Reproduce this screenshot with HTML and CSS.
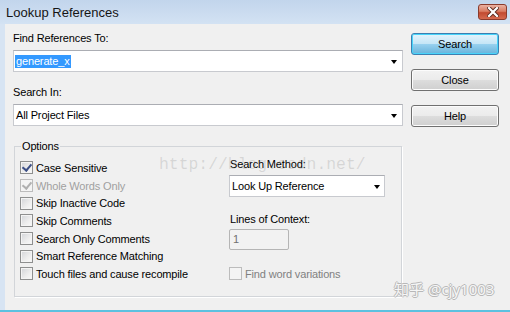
FILE: index.html
```html
<!DOCTYPE html>
<html>
<head>
<meta charset="utf-8">
<link rel="stylesheet" href="styles.css">
</head>
<body>
<div class="window">
  <div class="titlebar">
    <span class="title">Lookup References</span>
    <span class="close">
      <svg width="12" height="10" viewBox="0 0 12 10"><path d="M2 1 L10 9 M10 1 L2 9" stroke="#5a2a20" stroke-width="4" stroke-linecap="square"/><path d="M2 1 L10 9 M10 1 L2 9" stroke="#fff" stroke-width="2.2" stroke-linecap="square"/></svg>
    </span>
  </div>
  <div class="client">
    <div class="main">
      <div class="label">Find References To:</div>
      <div class="combo"><span class="value"><span class="sel">generate_x</span></span><span class="arrow"></span></div>
      <div class="label label-gap">Search In:</div>
      <div class="combo"><span class="value">All Project Files</span><span class="arrow"></span></div>
      <fieldset class="group">
        <legend>Options</legend>
        <div class="group-body">
          <div class="checks">
            <div class="row"><span class="cb on"></span><span>Case Sensitive</span></div>
            <div class="row dis"><span class="cb on"></span><span>Whole Words Only</span></div>
            <div class="row"><span class="cb"></span><span>Skip Inactive Code</span></div>
            <div class="row"><span class="cb"></span><span>Skip Comments</span></div>
            <div class="row"><span class="cb"></span><span>Search Only Comments</span></div>
            <div class="row"><span class="cb"></span><span>Smart Reference Matching</span></div>
            <div class="row"><span class="cb"></span><span>Touch files and cause recompile</span></div>
          </div>
          <div class="side">
            <div class="side-label">Search Method:</div>
            <div class="combo small"><span class="value">Look Up Reference</span><span class="arrow"></span></div>
            <div class="side-label second">Lines of Context:</div>
            <div class="spin">1</div>
            <div class="row dis2 last"><span class="cb off"></span><span>Find word variations</span></div>
          </div>
        </div>
      </fieldset>
    </div>
    <div class="buttons">
      <div class="btn default">Search</div>
      <div class="btn">Close</div>
      <div class="btn">Help</div>
    </div>
  </div>
  <div class="bottom-line"></div>
  <div class="watermark">http://blog.csdn.net/</div>
  <div class="credit">知乎 @cjy1003</div>
</div>
</body>
</html>
```

FILE: styles.css
```css
* { box-sizing: border-box; }
html, body { margin: 0; padding: 0; }
body {
  width: 510px;
  height: 312px;
  overflow: hidden;
  font-family: "Liberation Sans", Arial, sans-serif;
  font-size: 11px;
  letter-spacing: -0.15px;
  color: #000;
  background: #f0f0f0;
}
.window {
  position: relative;
  width: 510px;
  height: 312px;
  display: flex;
  flex-direction: column;
  background: #f0f0f0;
}
.titlebar {
  height: 24px;
  flex: none;
  display: flex;
  align-items: center;
  justify-content: space-between;
  padding: 0 3px 0 6px;
  background: linear-gradient(#c2d5ec, #d3e2f3);
}
.title {
  font-size: 13px;
  letter-spacing: 0;
  color: #151515;
  padding-top: 1px;
}
.close {
  width: 29px;
  height: 16px;
  margin-top: 0;
  border: 1px solid #8a3b2c;
  border-radius: 3px;
  background: linear-gradient(#eab1a2 0%, #d97c62 45%, #c24a30 55%, #d56a4f 100%);
  display: flex;
  align-items: center;
  justify-content: center;
}
.client {
  flex: 1;
  display: flex;
  border-left: 5px solid #d7e4f3;
  padding: 7px 0 0 8px;
}
.main { width: 390px; flex: none; }
.label { height: 15px; line-height: 15px; }
.label-gap { margin-top: 13px; }
.combo {
  margin-top: 4px;
  height: 22px;
  background: #fff;
  border: 1px solid #c8cacf;
  border-top-color: #abadb3;
  display: flex;
  align-items: center;
  justify-content: space-between;
  padding: 0 5px 0 1px;
}
.combo .value { line-height: 13px; padding-left: 1px; }
.sel {
  display: inline-block;
  background: #3399ff;
  color: #fff;
  padding: 0 1px 0 1px;
  margin-left: -1px;
  line-height: 13px;
}
.arrow {
  width: 0;
  height: 0;
  border-left: 3.5px solid transparent;
  border-right: 3.5px solid transparent;
  border-top: 4px solid #000;
  margin-top: 1px;
}
.group {
  width: 388px;
  margin: 13px 0 0 1px;
  padding: 0 5px 13px 5px;
  border: 1px solid #d2d5d9;
  box-shadow: 1px 1px 0 #fff;
  min-inline-size: 0;
}
.group legend {
  margin-left: 1px;
  padding: 0 1px;
  line-height: 15px;
  height: 15px;
}
.group-body {
  display: flex;
  padding-top: 5px;
}
.checks { width: 209px; flex: none; }
.row {
  height: 17.7px;
  display: flex;
  align-items: center;
  gap: 3px;
  white-space: nowrap;
}
.cb {
  position: relative;
  width: 13px;
  height: 13px;
  flex: none;
  border: 1px solid #8e8f8f;
  background: linear-gradient(135deg, #d2d4d8 0%, #eeeeee 60%, #fafafa 100%);
  box-shadow: inset 0 0 0 1px #f4f4f4;
}
.cb.on::after {
  content: "";
  position: absolute;
  left: 2px;
  top: 0px;
  width: 4px;
  height: 7px;
  border-right: 2px solid #3c4f86;
  border-bottom: 2px solid #3c4f86;
  transform: rotate(40deg);
  transform-origin: 50% 50%;
  margin-left: 1px;
}
.dis { color: #a0a0a0; }
.dis .cb { border-color: #bcbcbc; background: #f4f4f4; }
.dis .cb.on::after { border-color: #b0b0b0; }
.dis2 { color: #808080; }
.dis2 .cb { border-color: #bcbcbc; background: #f4f4f4; box-shadow: none; }
.side { width: 160px; }
.side-label {
  height: 15px;
  line-height: 15px;
  padding-left: 1px;
  margin-top: -2px;
}
.side-label.second { margin-top: 15px; }
.combo.small {
  margin-top: 3px;
  width: 156px;
  padding-right: 4px;
}
.spin {
  margin-top: 2px;
  width: 60px;
  height: 21px;
  border: 1px solid #b5b5b5;
  border-radius: 2px;
  background: #f2f2f2;
  color: #707070;
  line-height: 19px;
  padding-left: 3px;
}
.row.last { margin-top: 15px; }
.buttons {
  margin-left: 8px;
  margin-top: 2px;
  display: flex;
  flex-direction: column;
  gap: 14px;
}
.btn {
  width: 88px;
  height: 22px;
  border: 1px solid #707070;
  border-radius: 3px;
  background: linear-gradient(#f2f2f2 0%, #ebebeb 50%, #dddddd 51%, #cfcfcf 100%);
  box-shadow: inset 0 0 0 1px #fcfcfc;
  text-align: center;
  line-height: 20px;
}
.btn.default {
  border-color: #3c7fb1;
  background: linear-gradient(#e5f4fc 0%, #c4e5f6 50%, #98d1ef 51%, #68b3db 100%);
  box-shadow: inset 0 0 0 1px #48d4fa;
}
.bottom-line {
  height: 2px;
  flex: none;
  background: #5cc1e0;
}
.watermark {
  position: absolute;
  left: 159px;
  top: 155px;
  font-family: "Liberation Mono", "Courier New", monospace;
  font-size: 16.4px;
  letter-spacing: 0;
  color: rgba(120, 120, 120, 0.22);
}
.credit {
  position: absolute;
  left: 394px;
  top: 278px;
  font-family: "Noto Sans", "Noto Sans CJK SC", sans-serif;
  font-size: 15px;
  letter-spacing: 0;
  color: #f6f6f6;
  text-shadow: 1px 0 0 #b8b8b8, -1px 0 0 #b8b8b8, 0 1px 0 #b8b8b8, 0 -1px 0 #b8b8b8;
}
```
